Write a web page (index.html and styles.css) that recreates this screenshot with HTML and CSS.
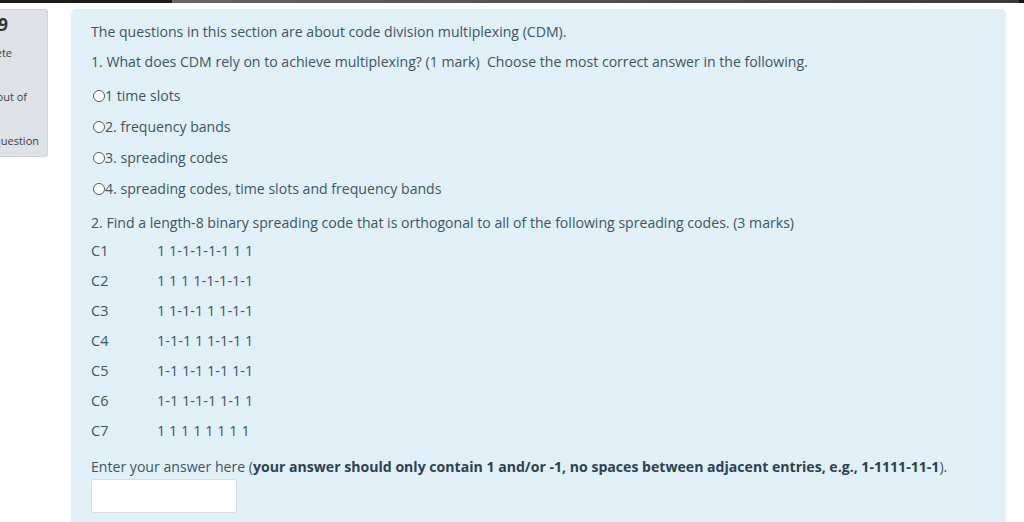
FILE: index.html
```html
<!DOCTYPE html>
<html>
<head>
<meta charset="utf-8">
<link rel="stylesheet" href="styles.css">
</head>
<body>
<div class="topbar"><div class="tb-left"></div><div class="tb-mid"></div><div class="tb-right"></div></div>
<div class="page">
  <div class="info">
    <div class="iline qno"><span>Question 9</span></div>
    <div class="iline st"><span>Complete</span></div>
    <div class="iline mk"><span>Marked out of</span></div>
    <div class="iline fl"><span>Flag question</span></div>
  </div>
  <div class="content">
    <p class="line l1">The questions in this section are about code division multiplexing (CDM).</p>
    <p class="line l2">1. What does CDM rely on to achieve multiplexing? (1 mark)&nbsp; Choose the most correct answer in the following.</p>
    <div class="opts">
      <div class="opt"><span class="radio"></span>1 time slots</div>
      <div class="opt"><span class="radio"></span>2. frequency bands</div>
      <div class="opt"><span class="radio"></span>3. spreading codes</div>
      <div class="opt"><span class="radio"></span>4. spreading codes, time slots and frequency bands</div>
    </div>
    <p class="line q2">2. Find a length-8 binary spreading code that is orthogonal to all of the following spreading codes. (3 marks)</p>
    <div class="codes">
      <div class="code"><span class="cl">C1</span><span class="cv">1 1-1-1-1-1 1 1</span></div>
      <div class="code"><span class="cl">C2</span><span class="cv">1 1 1 1-1-1-1-1</span></div>
      <div class="code"><span class="cl">C3</span><span class="cv">1 1-1-1 1 1-1-1</span></div>
      <div class="code"><span class="cl">C4</span><span class="cv">1-1-1 1 1-1-1 1</span></div>
      <div class="code"><span class="cl">C5</span><span class="cv">1-1 1-1 1-1 1-1</span></div>
      <div class="code"><span class="cl">C6</span><span class="cv">1-1 1-1-1 1-1 1</span></div>
      <div class="code"><span class="cl">C7</span><span class="cv">1 1 1 1 1 1 1 1</span></div>
    </div>
    <p class="line enter">Enter your answer here (<b>your answer should only contain 1 and/or -1, no spaces between adjacent entries, e.g., 1-1111-11-1</b>).</p>
    <div class="answer"></div>
  </div>
</div>
</body>
</html>
```

FILE: styles.css
```css
html, body {
  margin: 0;
  padding: 0;
  background: #ffffff;
  font-family: "Open Sans", "Noto Sans", sans-serif;
  overflow: hidden;
}
.topbar {
  display: flex;
  height: 3px;
}
.tb-left { width: 172px; background: #1b1b1b; }
.tb-mid { flex: 1; background: linear-gradient(to right, #666666, #3a3a3a); }
.tb-right { width: 5px; background: #111; }

.page {
  display: flex;
  align-items: flex-start;
  padding-top: 6px;
}
.info {
  width: 47px;
  height: 146px;
  flex: 0 0 47px;
  background: #dee2e6;
  border: 1px solid #cfd4d9;
  border-left: none;
  border-radius: 0 3px 3px 0;
  overflow: hidden;
  margin-right: 23px;
  color: #3a3f44;
  font-size: 11px;
}
.iline {
  display: flex;
  justify-content: flex-end;
  white-space: nowrap;
}
.iline span { flex: 0 0 auto; }
.qno { font-size: 17px; font-weight: 700; color: #333; margin-top: 5px; padding-right: 39px; line-height: 20px; }
.st { margin-top: 10px; padding-right: 35px; line-height: 16px; }
.mk { margin-top: 28px; padding-right: 20px; line-height: 16px; }
.fl { margin-top: 28px; padding-right: 8px; line-height: 16px; }

.content {
  flex: 0 0 935px;
  height: 560px;
  background: #e1eff7;
  border-radius: 5px;
  padding: 12px 20px 0 20px;
  box-sizing: border-box;
  color: #3e5563;
  font-size: 14.1px;
}
.line {
  margin: 0;
  line-height: 22px;
  white-space: nowrap;
}
.l2 { margin-top: 8px; }
.opts { margin-top: 7px; }
.opt {
  display: flex;
  align-items: center;
  height: 31px;
  white-space: nowrap;
}
.radio {
  display: inline-block;
  width: 10px;
  height: 10px;
  border: 1.5px solid #555b60;
  border-radius: 50%;
  margin-left: 2px;
  margin-right: 0;
  background: #fff;
}
.q2 { margin-top: 8px; }
.codes { margin-top: 1px; }
.code {
  display: flex;
  height: 30px;
  align-items: center;
  font-size: 14.5px;
}
.cl { width: 66px; }
.enter { margin-top: 11px; }
.enter b { font-weight: 700; color: #2c4250; }
.answer {
  margin-top: 1px;
  width: 144px;
  height: 32px;
  background: #fff;
  border: 1px solid #d6dde2;
  border-radius: 3px;
}
```
